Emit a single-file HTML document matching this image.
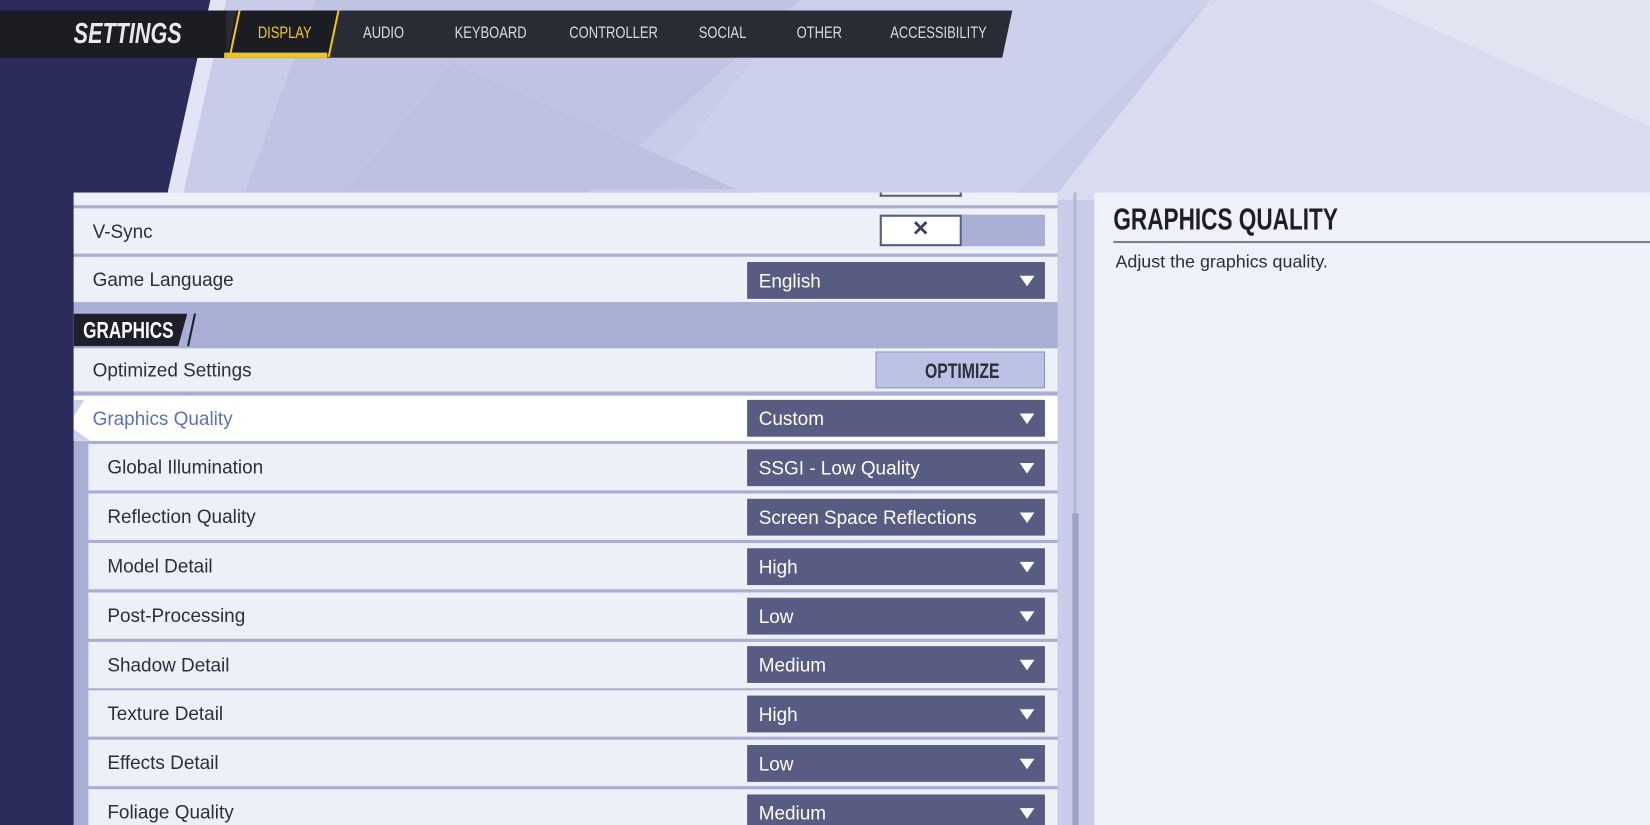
<!DOCTYPE html>
<html><head><meta charset="utf-8"><style>
*{margin:0;padding:0;box-sizing:border-box}
html,body{width:1650px;height:825px;overflow:hidden;background:#cdd1ea}
#w{position:absolute;left:0;top:0;width:1568px;height:784px;transform:scale(1.0523,1.0523);transform-origin:0 0;overflow:hidden;font-family:"Liberation Sans",sans-serif}
.n{transform-origin:0 0;white-space:nowrap}
.abs{position:absolute}
.row{position:absolute;background:#eef0f8;height:43px}
.lab{position:absolute;left:18px;top:12px;font-size:18px;color:#2c2e3a}
.dd{position:absolute;left:710px;width:283px;height:35px;background:#585b82;color:#fff;font-size:18px;padding:8px 0 0 11px}
.dd:after{content:"";position:absolute;right:10px;top:13px;border-left:7px solid transparent;border-right:7px solid transparent;border-top:10px solid #fff}
.tab{position:absolute;top:23px;font-size:16px;color:#d8dae2;transform:scaleX(0.77);transform-origin:0 0}
</style></head><body><div id="w">
<svg class="abs" style="left:0;top:0" width="1568" height="784">
<rect width="1568" height="784" fill="#c8cce8"/>
<polygon points="300,0 760,0 540,200 230,190" fill="#c0c4e3"/>
<polygon points="760,0 1150,0 960,190 620,180" fill="#ccd0ea"/>
<polygon points="1150,0 1568,0 1568,190 1000,190" fill="#d9dcee"/>
<polygon points="1300,0 1568,0 1568,120" fill="#e2e4f2"/>
<polygon points="430,60 700,180 330,180" fill="#bcc1e1"/>
<polygon points="0,0 200,0 160,180 70,784 0,784" fill="#2b2b5c"/>
<polygon points="200,0 215,0 175,180 85,784 70,784 160,180" fill="#e2e5f5"/>
</svg>
<div class="abs" style="left:0;top:10px;width:962px;height:45px;background:#2a2c35;clip-path:polygon(0 0,100% 0,99% 100%,0 100%)"></div>
<div class="abs" style="left:0;top:10px;width:215px;height:45px;background:#1c1d23"></div>
<div class="abs n" style="left:70px;top:17px;font-size:27px;font-weight:bold;font-style:italic;color:#e8e9ef;transform:scaleX(0.76)">SETTINGS</div>
<div class="abs" style="left:215px;top:10px;width:108px;height:45px;background:#1c1d23;clip-path:polygon(9% 0,100% 0,91% 100%,0 100%)"></div>
<div class="abs" style="left:213px;top:50px;width:98px;height:5px;background:#f0c419"></div>
<div class="abs" style="left:222px;top:10px;width:2px;height:44px;background:#f0c419;transform:skewX(-12deg)"></div>
<div class="abs" style="left:316px;top:10px;width:2px;height:44px;background:#f0c419;transform:skewX(-12deg)"></div>
<div class="tab" style="left:245px;color:#f2c81c">DISPLAY</div>
<div class="tab" style="left:345px">AUDIO</div>
<div class="tab" style="left:432px">KEYBOARD</div>
<div class="tab" style="left:541px">CONTROLLER</div>
<div class="tab" style="left:664px">SOCIAL</div>
<div class="tab" style="left:757px">OTHER</div>
<div class="tab" style="left:846px">ACCESSIBILITY</div>

<div class="abs" style="left:70px;top:183px;width:935px;height:601px;background:#a9aed4"></div>
<div class="row" style="left:70px;top:183px;width:935px;height:12px"></div>
<div class="abs" style="left:836px;top:183px;width:78px;height:4px;border:2px solid #585b82;border-top:none;background:#fff"></div>
<div class="row" style="left:70px;top:198px;width:935px"><div class="lab">V-Sync</div>
<div class="abs" style="left:766px;top:6px;width:157px;height:30px;background:#a9aed4"></div>
<div class="abs" style="left:766px;top:6px;width:78px;height:30px;background:#fff;border:2px solid #585b82;text-align:center;font-size:20px;font-weight:bold;color:#3c3e60;line-height:25px">✕</div></div>
<div class="row" style="left:70px;top:244px;width:935px"><div class="lab">Game Language</div></div>
<div class="dd" style="top:249px">English</div>
<div class="abs" style="left:70px;top:298px;width:108px;height:31px;background:#1e1f2a;clip-path:polygon(0 0,100% 0,92% 100%,0 100%)"></div>
<div class="abs" style="left:181px;top:298px;width:2px;height:31px;background:#1e1f2a;transform:skewX(-12deg)"></div>
<div class="abs n" style="left:79px;top:301px;font-size:22px;font-weight:bold;color:#fff;transform:scaleX(0.74)">GRAPHICS</div>
<div class="row" style="left:70px;top:331px;width:935px;height:41px"><div class="lab" style="top:11px">Optimized Settings</div>
<div class="abs" style="left:762px;top:3px;width:161px;height:35px;background:#bcc2e4;border:1px solid #8e94bf;padding:7px 0 0 46px"><div class="n" style="font-size:20px;font-weight:bold;color:#2c2e3a;transform:scaleX(0.75)">OPTIMIZE</div></div></div>
<div class="row" style="left:70px;top:376px;width:935px;background:#fff"><div class="lab" style="color:#5c72b8">Graphics Quality</div>
<svg class="abs" style="left:0;top:0" width="20" height="43"><polygon points="0,4 10,4 0,20" fill="#ccd0e8"/><polygon points="0,32 16,43 0,43" fill="#ccd0e8"/></svg></div>
<div class="dd" style="top:380px">Custom</div>

<div class="row" style="left:84px;top:422px;width:921px;height:44px"><div class="lab">Global Illumination</div></div><div class="dd" style="top:427px">SSGI - Low Quality</div>
<div class="row" style="left:84px;top:469px;width:921px;height:44px"><div class="lab">Reflection Quality</div></div><div class="dd" style="top:474px">Screen Space Reflections</div>
<div class="row" style="left:84px;top:516px;width:921px;height:44px"><div class="lab">Model Detail</div></div><div class="dd" style="top:521px">High</div>
<div class="row" style="left:84px;top:563px;width:921px;height:44px"><div class="lab">Post-Processing</div></div><div class="dd" style="top:568px">Low</div>
<div class="row" style="left:84px;top:610px;width:921px;height:44px"><div class="lab">Shadow Detail</div></div><div class="dd" style="top:614px">Medium</div>
<div class="row" style="left:84px;top:656px;width:921px;height:44px"><div class="lab">Texture Detail</div></div><div class="dd" style="top:661px">High</div>
<div class="row" style="left:84px;top:703px;width:921px;height:44px"><div class="lab">Effects Detail</div></div><div class="dd" style="top:708px">Low</div>
<div class="row" style="left:84px;top:750px;width:921px;height:44px"><div class="lab">Foliage Quality</div></div><div class="dd" style="top:755px">Medium</div>

<div class="abs" style="left:1020px;top:183px;width:3px;height:601px;background:#b4b8d6"></div>
<div class="abs" style="left:1019px;top:488px;width:6px;height:296px;background:#9ea3c6"></div>
<div class="abs" style="left:1040px;top:183px;width:528px;height:601px;background:#eef1fa"></div>
<div class="abs n" style="left:1058px;top:193px;font-size:29px;font-weight:bold;color:#1e1f26;transform:scaleX(0.74)">GRAPHICS QUALITY</div>
<div class="abs" style="left:1058px;top:229px;width:510px;height:2px;background:#7d808f"></div>
<div class="abs" style="left:1060px;top:239px;font-size:17px;color:#2c2e3a">Adjust the graphics quality.</div>
</div></body></html>
